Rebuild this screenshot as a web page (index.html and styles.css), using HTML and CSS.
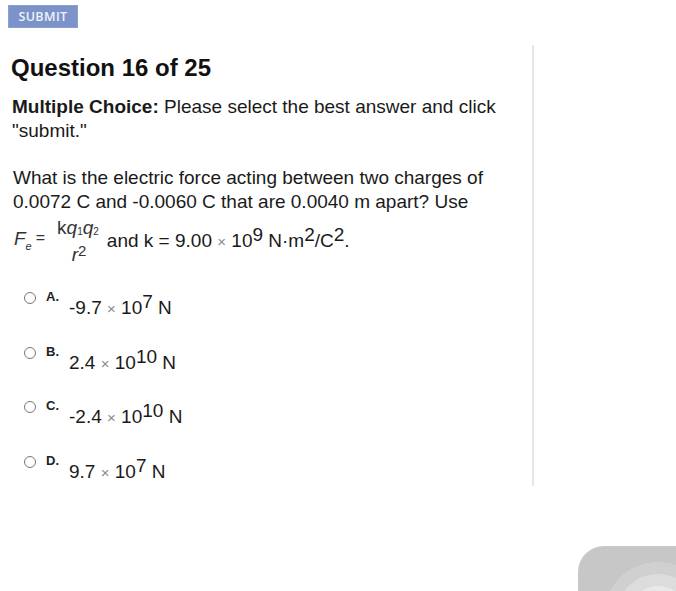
FILE: index.html
```html
<!DOCTYPE html>
<html>
<head>
<meta charset="utf-8">
<link rel="stylesheet" href="styles.css">
</head>
<body>
<div class="topbar"><button class="submit">SUBMIT</button></div>
<div class="main">
  <div class="content">
    <h1 class="title">Question 16 of 25</h1>
    <p class="instr"><b>Multiple Choice:</b> Please select the best answer and click "submit."</p>
    <p class="question">What is the electric force acting between two charges of 0.0072 C and -0.0060 C that are 0.0040 m apart? Use</p>
    <div class="formula">
      <span class="fe"><i>F</i><sub><i>e</i></sub></span>
      <span class="eq">=</span>
      <span class="frac"><span class="num">k<i>q</i><sub>1</sub><i>q</i><sub>2</sub></span><span class="den"><i>r</i><sup>2</sup></span></span>
      <span class="rest">and k = 9.00 <span class="x">×</span> 10<sup>9</sup> N·m<sup>2</sup>/C<sup>2</sup>.</span>
    </div>
    <ul class="options">
      <li class="opt"><span class="radio"></span><span class="letter">A.</span><span class="ans">-9.7 <span class="x">×</span> 10<sup>7</sup> N</span></li>
      <li class="opt"><span class="radio"></span><span class="letter">B.</span><span class="ans">2.4 <span class="x">×</span> 10<sup>10</sup> N</span></li>
      <li class="opt"><span class="radio"></span><span class="letter">C.</span><span class="ans">-2.4 <span class="x">×</span> 10<sup>10</sup> N</span></li>
      <li class="opt"><span class="radio"></span><span class="letter">D.</span><span class="ans">9.7 <span class="x">×</span> 10<sup>7</sup> N</span></li>
    </ul>
  </div>
  <div class="rule"></div>
</div>
<div class="corner"></div>
</body>
</html>
```
FILE: styles.css
```css
html, body {
  margin: 0;
  padding: 0;
  background: #ffffff;
  overflow: hidden;
  height: 591px;
}
body {
  font-family: "Liberation Sans", Arial, sans-serif;
  color: #1a1a1a;
  position: relative;
}
.topbar {
  padding: 5px 0 0 8px;
  height: 24px;
}
.submit {
  display: block;
  width: 70px;
  height: 23px;
  background: #7b93c9;
  border: 1px solid #8aa0d0;
  color: #eef2fb;
  font-family: "Open Sans", "DejaVu Sans", sans-serif;
  font-size: 12.5px;
  font-weight: 600;
  letter-spacing: 0.4px;
  padding: 0;
  margin: 0;
}
.main {
  display: flex;
}
.content {
  width: 521px;
  padding-left: 11px;
}
.rule {
  width: 2px;
  background: #e6e6e6;
  margin-top: 16px;
  height: 441px;
}
.title {
  font-size: 24px;
  font-weight: bold;
  margin: 24px 0 0 0;
  line-height: 30px;
  color: #111;
}
.instr {
  font-size: 19px;
  line-height: 24px;
  margin: 12px 0 0 1px;
}
.question {
  font-size: 19px;
  line-height: 24px;
  margin: 23px 0 0 2px;
}
.formula {
  display: flex;
  align-items: center;
  font-size: 19px;
  margin: 0 0 0 3px;
  height: 46px;
}
.fe {
  font-size: 19px;
  color: #333;
  margin-top: 6px;
}
.fe sub {
  font-size: 11px;
}
.eq {
  margin: 2px 4px 0 4px;
  color: #333;
  font-size: 16px;
}
.frac {
  display: inline-flex;
  flex-direction: column;
  align-items: center;
  font-size: 19px;
  line-height: 23px;
  color: #333;
  margin-left: 8px;
  margin-top: 8px;
}
.frac sub {
  font-size: 10px;
  vertical-align: -1px;
}
.den {
  margin-left: 2px;
}
.den sup {
  font-size: 15px;
  vertical-align: 5px;
  line-height: 0;
}
.rest {
  margin-left: 8px;
  margin-top: 8px;
}
.rest sup {
  font-size: 19px;
  vertical-align: 6px;
  line-height: 0;
}
.x {
  color: #8a8a8a;
  font-size: 15px;
}
.options {
  list-style: none;
  margin: 30px 0 0 0;
  padding: 0 0 0 13px;
}
.opt {
  display: flex;
  align-items: flex-start;
  height: 54.5px;
}
.radio {
  width: 10px;
  height: 10px;
  border: 1.5px solid #777;
  border-radius: 50%;
  margin-top: 2px;
  flex: none;
}
.letter {
  font-size: 13px;
  font-weight: bold;
  margin-left: 10px;
  width: 23px;
  line-height: 13px;
  color: #222;
}
.ans {
  font-size: 19px;
  margin-top: 7px;
  line-height: 22px;
  color: #1a1a1a;
}
.ans sup {
  font-size: 19px;
  vertical-align: 6px;
  line-height: 0;
}
.corner {
  position: absolute;
  left: 578px;
  top: 546px;
  width: 98px;
  height: 45px;
  border-radius: 26px 0 0 0;
  background: radial-gradient(circle at 80px 70px, #e8e8e8 0 30px, #dcdcdc 30px 42px, #d0d0d0 42px 54px, #c7c7c7 54px);
}
```
